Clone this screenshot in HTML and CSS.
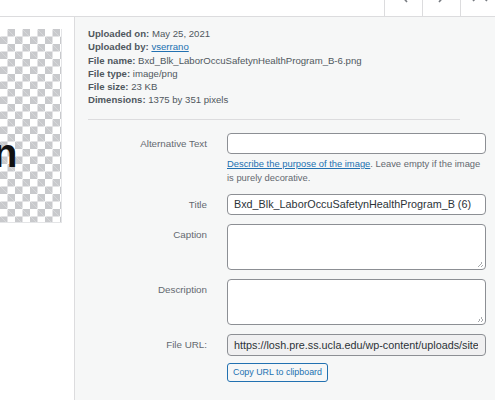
FILE: index.html
```html
<!DOCTYPE html>
<html>
<head>
<meta charset="utf-8">
<link rel="stylesheet" href="styles.css">
</head>
<body>
<div class="modal">
  <header class="top">
    <div class="nav-group">
      <button class="nav" aria-label="Previous">
        <svg width="20" height="20" viewBox="0 0 20 20"><path d="M13 2 L6 10 L13 18" fill="none" stroke="#787c82" stroke-width="1.6"/></svg>
      </button>
      <button class="nav" aria-label="Next">
        <svg width="20" height="20" viewBox="0 0 20 20"><path d="M7 2 L14 10 L7 18" fill="none" stroke="#787c82" stroke-width="1.6"/></svg>
      </button>
      <button class="nav" aria-label="Close">
        <svg class="close-icon" width="20" height="20" viewBox="0 0 20 20"><path d="M3 3 L17 17 M17 3 L3 17" fill="none" stroke="#787c82" stroke-width="1.6"/></svg>
      </button>
    </div>
  </header>
  <div class="body">
    <div class="media">
      <div class="thumb"><span class="glyph">n</span></div>
    </div>
    <div class="details">
      <div class="meta">
        <div><strong>Uploaded on:</strong> May 25, 2021</div>
        <div><strong>Uploaded by:</strong> <a href="#">vserrano</a></div>
        <div><strong>File name:</strong> Bxd_Blk_LaborOccuSafetynHealthProgram_B-6.png</div>
        <div><strong>File type:</strong> image/png</div>
        <div><strong>File size:</strong> 23 KB</div>
        <div><strong>Dimensions:</strong> 1375 by 351 pixels</div>
      </div>
      <div class="rule"></div>
      <div class="settings">
        <div class="row">
          <label class="label">Alternative Text</label>
          <div class="field">
            <div class="input"></div>
            <p class="help"><a href="#">Describe the purpose of the image</a>. Leave empty if the image is purely decorative.</p>
          </div>
        </div>
        <div class="row">
          <label class="label">Title</label>
          <div class="field">
            <div class="input"><span class="value">Bxd_Blk_LaborOccuSafetynHealthProgram_B (6)</span></div>
          </div>
        </div>
        <div class="row">
          <label class="label">Caption</label>
          <div class="field">
            <div class="textarea"><span class="grip"></span></div>
          </div>
        </div>
        <div class="row">
          <label class="label">Description</label>
          <div class="field">
            <div class="textarea"><span class="grip"></span></div>
          </div>
        </div>
        <div class="row row-url">
          <label class="label">File URL:</label>
          <div class="field">
            <div class="input readonly"><span class="value">https://losh.pre.ss.ucla.edu/wp-content/uploads/sites/</span></div>
            <button class="copy">Copy URL to clipboard</button>
          </div>
        </div>
      </div>
    </div>
  </div>
</div>
</body>
</html>
```

FILE: styles.css
```css
html, body {
  margin: 0;
  padding: 0;
  height: 100%;
}
body {
  font-family: "Liberation Sans", Arial, sans-serif;
  color: #3c434a;
  background: #f6f7f7;
  overflow: hidden;
}
.modal {
  display: flex;
  flex-direction: column;
  height: 400px;
  width: 495px;
  overflow: hidden;
}
.top {
  height: 16px;
  background: #fff;
  border-bottom: 1px solid #dcdcde;
  display: flex;
  justify-content: flex-end;
  flex-shrink: 0;
}
.nav-group {
  display: flex;
  margin-right: -3px;
}
.nav {
  width: 38px;
  height: 16px;
  padding: 0;
  border: 0;
  border-left: 1px solid #dcdcde;
  background: #fff;
  display: flex;
  align-items: flex-end;
  justify-content: center;
  overflow: hidden;
}
.nav svg {
  margin-bottom: 12px;
  flex-shrink: 0;
}
.nav svg.close-icon {
  margin-bottom: 12px;
}
.body {
  display: flex;
  flex: 1;
}
.media {
  width: 74px;
  background: #fff;
  border-right: 1px solid #dcdcde;
  padding-top: 12px;
  flex-shrink: 0;
}
.thumb {
  width: 62px;
  height: 194px;
  overflow: hidden;
  box-shadow: inset -1px 0 0 #e4e5e7, inset 0 -1px 0 #e4e5e7;
  background-color: #fff;
  background-image:
    linear-gradient(45deg, #c8c9cc 25%, transparent 25%, transparent 75%, #c8c9cc 75%, #c8c9cc),
    linear-gradient(45deg, #c8c9cc 25%, transparent 25%, transparent 75%, #c8c9cc 75%, #c8c9cc);
  background-size: 15px 15px;
  background-position: 0 0, 7.5px 7.5px;
}
.glyph {
  display: block;
  font-family: "Liberation Sans", Arial, sans-serif;
  font-weight: bold;
  font-size: 40px;
  line-height: 40px;
  color: #111;
  margin-left: -7px;
  margin-top: 104px;
}
.details {
  flex: 1;
  padding-top: 10px;
}
.meta {
  padding-left: 13px;
  font-size: 9.6px;
  line-height: 13.3px;
  color: #50575e;
}
.meta strong {
  font-weight: bold;
  color: #50575e;
}
.meta a, .help a {
  color: #2271b1;
  text-decoration: underline;
}
.rule {
  margin: 12px 0 0 13px;
  width: 372px;
  height: 1px;
  background: #dcdcde;
}
.settings {
  padding-top: 13px;
}
.row {
  display: flex;
  margin-bottom: 9px;
}
.row-url {
  margin-top: 1px;
}
.label {
  width: 132px;
  margin-right: 20px;
  text-align: right;
  font-size: 9.8px;
  line-height: 14px;
  color: #646970;
  padding-top: 4px;
  flex-shrink: 0;
}
.field {
  width: 259px;
  display: flex;
  flex-direction: column;
  align-items: flex-start;
}
.input {
  box-sizing: border-box;
  width: 259px;
  height: 21px;
  border: 1px solid #8c8f94;
  border-radius: 4px;
  background: #fff;
  font-size: 10.8px;
  line-height: 19px;
  padding: 0 7px 0 6px;
  color: #2c3338;
}
.value {
  display: block;
  white-space: nowrap;
  overflow: hidden;
}
.input.readonly {
  height: 22px;
  line-height: 20px;
  background: #f0f0f1;
  color: #2c3338;
}
.help {
  margin: 3px 0 0 0;
  font-size: 9.4px;
  line-height: 14px;
  color: #646970;
}
.textarea {
  box-sizing: border-box;
  width: 259px;
  height: 46px;
  border: 1px solid #8c8f94;
  border-radius: 4px;
  background: #fff;
  position: relative;
}
.grip {
  position: absolute;
  right: 2px;
  bottom: 2px;
  width: 5px;
  height: 5px;
  background: linear-gradient(135deg, transparent 40%, #a7aaad 40%, #a7aaad 50%, transparent 50%, transparent 70%, #a7aaad 70%, #a7aaad 80%, transparent 80%);
}
.copy {
  margin-top: 7px;
  box-sizing: border-box;
  width: 101px;
  height: 19px;
  padding: 0;
  border: 1px solid #2271b1;
  border-radius: 3px;
  background: #f6f7f7;
  color: #2271b1;
  font-family: "Liberation Sans", Arial, sans-serif;
  font-size: 8.9px;
  line-height: 17px;
  text-align: center;
}
```
